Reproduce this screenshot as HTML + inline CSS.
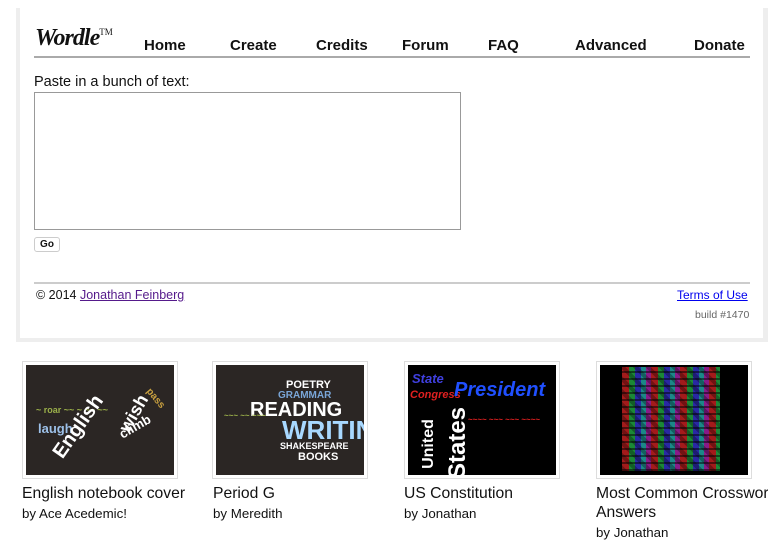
<!DOCTYPE html>
<html><head><meta charset="utf-8"><style>
*{margin:0;padding:0;box-sizing:border-box}
body{width:768px;height:549px;background:#fff;font-family:"Liberation Sans",Arial,sans-serif;position:relative;overflow:hidden;color:#111}
.a{position:absolute}
#panel{left:16px;top:8px;width:756px;height:334px;border:4px solid #eee;border-top:none;border-right:none;background:#fff}
#panel2{left:763px;top:8px;width:5px;height:334px;background:#eee}
.nav{font-weight:bold;font-size:15px;top:37px}
.logo{left:35px;top:25px;font-family:"Liberation Serif",serif;font-style:italic;font-weight:bold;font-size:24px;letter-spacing:-1px}
.thumb{top:361px;width:156px;height:118px;border:1px solid #ddd;padding:3px;background:#fff}
.thumb .i{width:100%;height:100%;overflow:hidden;position:relative}
.t{font-size:15.7px;top:485px}
.b{font-size:13.3px;top:506px}
.w{position:absolute;font-weight:bold;white-space:nowrap}
</style></head><body>
<div class="a" id="panel"></div><div class="a" id="panel2"></div>
<div class="a logo">Wordle<span style="font-size:9px;font-style:normal;font-weight:normal;vertical-align:top;position:relative;top:2px;letter-spacing:0">TM</span></div>
<div class="a nav" style="left:144px">Home</div>
<div class="a nav" style="left:230px">Create</div>
<div class="a nav" style="left:316px">Credits</div>
<div class="a nav" style="left:402px">Forum</div>
<div class="a nav" style="left:488px">FAQ</div>
<div class="a nav" style="left:575px">Advanced</div>
<div class="a nav" style="left:694px">Donate</div>
<div class="a" style="left:34px;top:56px;width:716px;height:2px;background:#aaa"></div>
<div class="a" style="left:34px;top:74px;font-size:14.5px">Paste in a bunch of text:</div>
<div class="a" style="left:34px;top:92px;width:427px;height:138px;border:1px solid #999"></div>
<div class="a" style="left:34px;top:237px;width:26px;height:15px;border:1px solid #ccc;border-radius:3px;font-size:10px;text-align:center;line-height:13px;font-weight:bold">Go</div>
<div class="a" style="left:34px;top:282px;width:716px;height:2px;background:#ccc"></div>
<div class="a" style="left:36px;top:288px;font-size:12.5px">© 2014 <span style="color:#551a8b;text-decoration:underline">Jonathan Feinberg</span></div>
<div class="a" style="left:677px;top:288px;font-size:12px;color:#00e;text-decoration:underline">Terms of Use</div>
<div class="a" style="left:695px;top:309px;font-size:10.5px;color:#666">build #1470</div>

<div class="a thumb" style="left:22px"><div class="i" style="background:#2b2624">
<span class="w" style="left:10px;top:40px;font-size:9px;color:#9bb04a">~ roar ~~ ~ ~~ ~~</span>
<span class="w" style="left:12px;top:56px;font-size:13px;color:#9cc0e8">laugh</span>
<span class="w" style="left:32px;top:80px;font-size:20px;color:#fff;transform:rotate(-55deg);transform-origin:left">English</span>
<span class="w" style="left:88px;top:38px;font-size:18px;color:#fff;transform:rotate(-60deg)">wish</span>
<span class="w" style="left:92px;top:54px;font-size:13px;color:#fff;transform:rotate(-30deg)">climb</span>
<span class="w" style="left:118px;top:28px;font-size:10px;color:#c8a040;transform:rotate(50deg)">pass</span>
</div></div>
<div class="a thumb" style="left:212px"><div class="i" style="background:#2b2624">
<span class="w" style="left:70px;top:14px;font-size:11px;color:#fff">POETRY</span>
<span class="w" style="left:62px;top:25px;font-size:10px;color:#7aa6d8">GRAMMAR</span>
<span class="w" style="left:34px;top:34px;font-size:20px;color:#fff">READING</span>
<span class="w" style="left:66px;top:50px;font-size:26px;color:#a8d8ff">WRITING</span>
<span class="w" style="left:64px;top:76px;font-size:9px;color:#fff">SHAKESPEARE</span>
<span class="w" style="left:82px;top:86px;font-size:11px;color:#fff">BOOKS</span>
<span class="w" style="left:8px;top:46px;font-size:8px;color:#9bb04a">~~~ ~~ ~~~</span>
</div></div>
<div class="a thumb" style="left:404px"><div class="i" style="background:#000">
<span class="w" style="left:4px;top:6px;font-size:13px;color:#4040e0;font-style:italic">State</span>
<span class="w" style="left:2px;top:24px;font-size:11px;color:#e02020;font-style:italic">Congress</span>
<span class="w" style="left:46px;top:14px;font-size:20px;color:#2050ff;font-style:italic">President</span>
<span class="w" style="left:-4px;top:70px;font-size:16px;color:#fff;transform:rotate(-90deg)">United</span>
<span class="w" style="left:14px;top:64px;font-size:24px;color:#fff;transform:rotate(-90deg)">States</span>
<span class="w" style="left:60px;top:50px;font-size:8px;color:#e02020">~~~~ ~~~ ~~~ ~~~~</span>
</div></div>
<div class="a thumb" style="left:596px"><div class="i" style="background:#000">
<div style="position:absolute;left:22px;top:2px;width:98px;height:104px;background:repeating-linear-gradient(90deg,#c02020 0 7px,#20a040 7px 13px,#3030c0 13px 19px,#20a0a0 19px 24px,#a020a0 24px 29px);opacity:.85"></div>
<div style="position:absolute;left:22px;top:2px;width:98px;height:104px;background:repeating-linear-gradient(0deg,rgba(0,0,0,.5) 0 2px,transparent 2px 7px),repeating-linear-gradient(45deg,rgba(0,0,0,.3) 0 4px,transparent 4px 9px)"></div>
</div></div>

<div class="a t" style="left:22px">English notebook cover</div>
<div class="a b" style="left:22px">by Ace Acedemic!</div>
<div class="a t" style="left:213px">Period G</div>
<div class="a b" style="left:213px">by Meredith</div>
<div class="a t" style="left:404px">US Constitution</div>
<div class="a b" style="left:404px">by Jonathan</div>
<div class="a t" style="left:596px;white-space:nowrap">Most Common Crossword</div>
<div class="a t" style="left:596px;top:504px">Answers</div>
<div class="a b" style="left:596px;top:525px">by Jonathan</div>
</body></html>
